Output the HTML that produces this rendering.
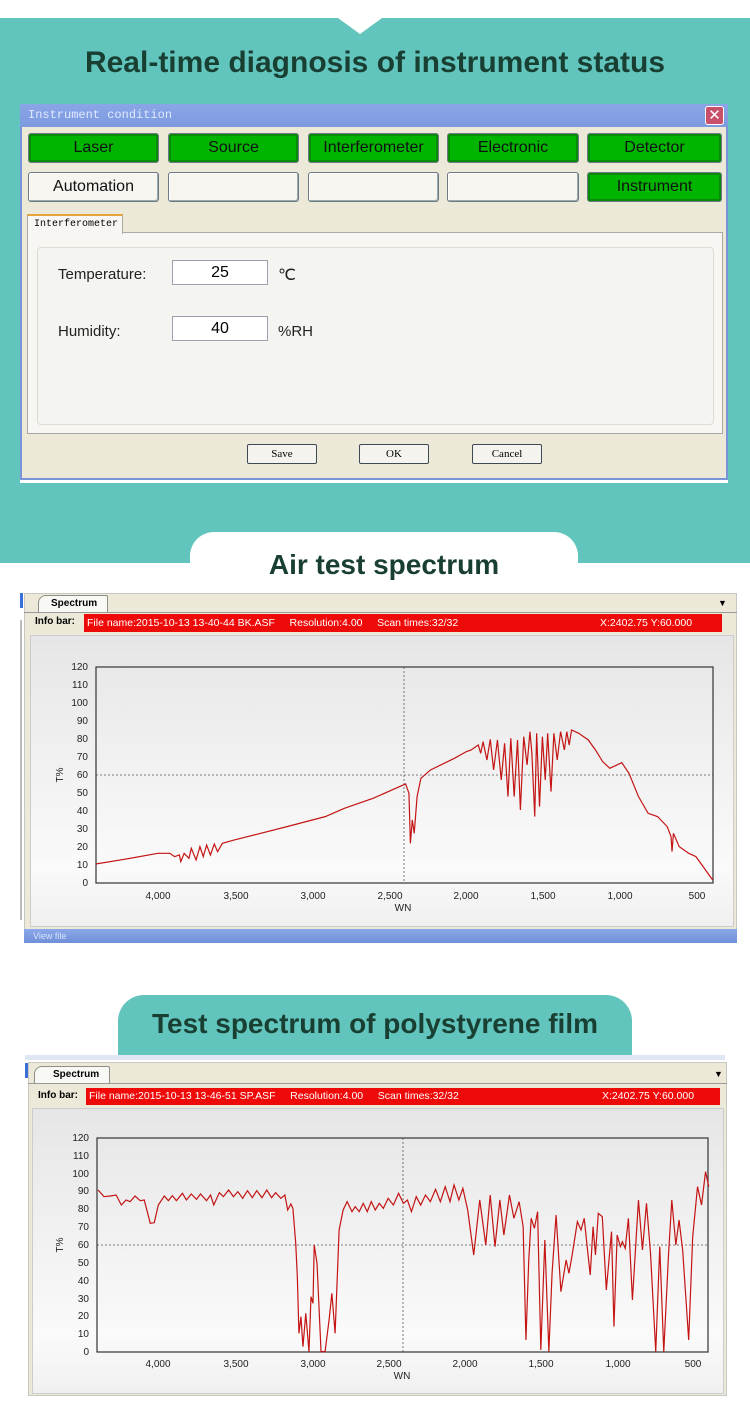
<!DOCTYPE html>
<html><head><meta charset="utf-8"><style>
*{margin:0;padding:0;box-sizing:border-box}
body{width:750px;height:1424px;position:relative;background:#fff;font-family:"Liberation Sans",Arial,sans-serif;overflow:hidden}
.abs{position:absolute}
.teal{background:#62c5bd}
.h1{font-weight:bold;color:#193f33;text-align:center}
.btn{position:absolute;height:30px;border:1px solid #6d7a86;border-radius:3px;font-size:16px;text-align:center;line-height:28px;color:#111;box-shadow:inset -1px -1px 0 #9aa,inset 1px 1px 0 #fff}
.g{background:#00b400;box-shadow:inset 0 0 0 2px #0a8a0a}
.w{background:#f6f5f0}
.sb{position:absolute;top:444px;width:70px;height:20px;border:1px solid #404a55;border-radius:2px;background:#f4f3ee;font-family:"Liberation Serif",serif;font-size:11px;text-align:center;line-height:18px}
.inp{position:absolute;left:172px;width:96px;height:25px;background:#fff;border:1px solid #9aa3ad;text-align:center;font-size:16px;line-height:23px}
.lbl{position:absolute;font-size:15px;color:#222}
.tick{font-size:10px;fill:#222;font-family:"Liberation Sans",sans-serif}
</style></head><body>
<div class="abs teal" style="left:0;top:18px;width:750px;height:545px"></div>
<div class="abs" style="left:338px;top:18px;width:0;height:0;border-left:22px solid transparent;border-right:22px solid transparent;border-top:16px solid #fff"></div>
<div class="abs h1" style="left:0;top:46px;width:750px;font-size:30px">Real-time diagnosis of instrument status</div>

<!-- dialog -->
<div class="abs" style="left:20px;top:104px;width:708px;height:376px;background:#ece9d8;border:2px solid #7b93d8;border-top:none"></div>
<div class="abs" style="left:20px;top:104px;width:708px;height:23px;background:linear-gradient(#8aa6e6,#7d9ae0);color:#dfe8ff;font-family:'Liberation Mono',monospace;font-size:12px;line-height:23px;padding-left:8px">Instrument condition</div>
<div class="abs" style="left:705px;top:106px;width:19px;height:19px;background:#c9506a;border:1px solid #fff;border-radius:3px;color:#fff;font-size:15px;text-align:center;line-height:17px">✕</div>
<div class="btn g" style="left:28px;top:133px;width:131px">Laser</div>
<div class="btn g" style="left:168px;top:133px;width:131px">Source</div>
<div class="btn g" style="left:308px;top:133px;width:131px">Interferometer</div>
<div class="btn g" style="left:447px;top:133px;width:132px">Electronic</div>
<div class="btn g" style="left:587px;top:133px;width:135px">Detector</div>
<div class="btn w" style="left:28px;top:172px;width:131px">Automation</div>
<div class="btn w" style="left:168px;top:172px;width:131px"></div>
<div class="btn w" style="left:308px;top:172px;width:131px"></div>
<div class="btn w" style="left:447px;top:172px;width:132px"></div>
<div class="btn g" style="left:587px;top:172px;width:135px">Instrument</div>
<div class="abs" style="left:27px;top:232px;width:696px;height:202px;background:#f7f6f2;border:1px solid #a9aaa5"></div>
<div class="abs" style="left:27px;top:214px;width:96px;height:20px;background:#f7f6f2;border:1px solid #a9aaa5;border-top:2px solid #e8a33c;border-bottom:none;font-family:'Liberation Mono',monospace;font-size:10px;line-height:17px;padding-left:6px">Interferometer</div>
<div class="abs" style="left:37px;top:247px;width:677px;height:178px;border:1px solid #dcdcd6;border-radius:4px;background:#f4f4f1"></div>
<div class="lbl" style="left:58px;top:266px">Temperature:</div>
<div class="inp" style="top:260px">25</div>
<div class="lbl" style="left:278px;top:265px;font-size:16px">℃</div>
<div class="lbl" style="left:58px;top:323px">Humidity:</div>
<div class="inp" style="top:316px">40</div>
<div class="lbl" style="left:278px;top:323px">%RH</div>
<div class="sb" style="left:247px">Save</div>
<div class="sb" style="left:359px">OK</div>
<div class="sb" style="left:472px">Cancel</div>
<div class="abs" style="left:20px;top:480px;width:708px;height:3px;background:#fff"></div>

<!-- pill 1 -->
<div class="abs h1" style="left:190px;top:532px;width:388px;height:50px;background:#fff;border-radius:24px 24px 0 0;font-size:28px;line-height:66px">Air test spectrum</div>

<!-- window 1 -->
<div class="abs" style="left:20px;top:593px;width:3px;height:15px;background:#3a6fd8"></div>
<div class="abs" style="left:20px;top:620px;width:2px;height:300px;background:#bbb"></div>
<div class="abs" style="left:24px;top:593px;width:713px;height:350px;background:#ece9d8;border:1px solid #c8c8c0"></div>
<div class="abs" style="left:38px;top:595px;width:70px;height:17px;background:#f8f8f4;border:1px solid #8e8e88;border-bottom:none;border-radius:8px 2px 0 0;font-size:10px;font-weight:bold;line-height:15px;padding-left:12px">Spectrum</div>
<div class="abs" style="left:718px;top:598px;font-size:9px">▼</div>
<div class="abs" style="left:24px;top:612px;width:713px;height:1px;background:#999"></div>
<div class="abs" style="left:35px;top:616px;font-size:10px;font-weight:bold">Info bar:</div>
<div class="abs" style="left:84px;top:614px;width:638px;height:18px;background:#ef0a0a;color:#fff;font-size:10.5px;line-height:18px;white-space:pre;padding-left:3px">File name:2015-10-13 13-40-44 BK.ASF     Resolution:4.00     Scan times:32/32</div>
<div class="abs" style="left:600px;top:614px;color:#fff;font-size:10.5px;line-height:18px">X:2402.75 Y:60.000</div>
<div class="abs" style="left:30px;top:635px;width:704px;height:292px;background:linear-gradient(#e6e6e6,#fafafa 80%,#f0f0f0);border:1px solid #ccc"></div>
<div class="abs" style="left:24px;top:929px;width:713px;height:14px;background:linear-gradient(#8ba8e8,#6f8fd8);color:#d8e2ff;font-size:9px;line-height:14px;padding-left:9px">View file</div>

<!-- pill 2 -->
<div class="abs teal h1" style="left:118px;top:995px;width:514px;height:62px;border-radius:26px 26px 0 0;font-size:28px;line-height:58px">Test spectrum of polystyrene film</div>
<div class="abs" style="left:25px;top:1055px;width:700px;height:5px;background:#dfe7f5"></div>
<div class="abs" style="left:25px;top:1063px;width:3px;height:15px;background:#3a6fd8"></div>
<div class="abs" style="left:28px;top:1062px;width:699px;height:334px;background:#ece9d8;border:1px solid #c8c8c0"></div>
<div class="abs" style="left:34px;top:1066px;width:76px;height:17px;background:#f8f8f4;border:1px solid #8e8e88;border-bottom:none;border-radius:8px 2px 0 0;font-size:10px;font-weight:bold;line-height:15px;padding-left:18px">Spectrum</div>
<div class="abs" style="left:714px;top:1069px;font-size:9px">▼</div>
<div class="abs" style="left:28px;top:1083px;width:699px;height:1px;background:#999"></div>
<div class="abs" style="left:38px;top:1090px;font-size:10px;font-weight:bold">Info bar:</div>
<div class="abs" style="left:86px;top:1088px;width:634px;height:17px;background:#ef0a0a;color:#fff;font-size:10.5px;line-height:17px;white-space:pre;padding-left:3px">File name:2015-10-13 13-46-51 SP.ASF     Resolution:4.00     Scan times:32/32</div>
<div class="abs" style="left:602px;top:1088px;color:#fff;font-size:10.5px;line-height:17px">X:2402.75 Y:60.000</div>
<div class="abs" style="left:32px;top:1108px;width:692px;height:286px;background:linear-gradient(#e6e6e6,#fafafa 80%,#f0f0f0);border:1px solid #ccc"></div>

<svg class="abs" style="left:0;top:0" width="750" height="1424" viewBox="0 0 750 1424">
<rect x="96" y="667" width="617" height="216" fill="none" stroke="#333" stroke-width="1.2"/>
<line x1="404" y1="667" x2="404" y2="883" stroke="#555" stroke-dasharray="2,2" stroke-width=".8"/>
<line x1="96" y1="775" x2="713" y2="775" stroke="#555" stroke-dasharray="2,2" stroke-width=".8"/>
<g class="tick" text-anchor="end">
<text x="88" y="670">120</text><text x="88" y="688">110</text><text x="88" y="706">100</text><text x="88" y="724">90</text><text x="88" y="742">80</text><text x="88" y="760">70</text><text x="88" y="778">60</text><text x="88" y="796">50</text><text x="88" y="814">40</text><text x="88" y="832">30</text><text x="88" y="850">20</text><text x="88" y="868">10</text><text x="88" y="886">0</text>
</g>
<text class="tick" transform="translate(63,775) rotate(-90)" text-anchor="middle">T%</text>
<g class="tick" text-anchor="middle">
<text x="158" y="899">4,000</text><text x="236" y="899">3,500</text><text x="313" y="899">3,000</text><text x="390" y="899">2,500</text><text x="466" y="899">2,000</text><text x="543" y="899">1,500</text><text x="620" y="899">1,000</text><text x="697" y="899">500</text><text x="403" y="911">WN</text>
</g>
<g transform="translate(0,580) scale(0.4783,0.3333)">
<polyline fill="none" stroke="#c41414" stroke-width="1.2" vector-effect="non-scaling-stroke" points="200,852 260,838 330,820 355,820 365,830 375,825 378,845 385,820 395,835 400,805 410,840 418,800 425,830 432,795 440,825 448,792 455,815 465,790 490,780 540,762 600,740 680,710 720,685 780,655 848,612 855,640 858,790 862,720 866,760 872,650 880,595 900,570 950,535 975,515 985,510 995,500 1000,495 1005,520 1010,485 1018,540 1025,478 1032,570 1040,480 1048,600 1055,490 1062,650 1068,475 1075,650 1082,480 1088,690 1095,470 1102,555 1108,455 1112,520 1118,710 1122,460 1128,680 1134,470 1140,600 1145,460 1152,635 1158,460 1165,540 1172,455 1180,510 1185,455 1190,495 1195,450 1210,460 1230,480 1245,510 1260,545 1275,565 1300,548 1315,580 1335,650 1355,700 1375,710 1395,740 1403,770 1405,815 1408,760 1420,800 1440,820 1455,830 1470,860 1490,900"/>
</g>
<rect x="97" y="1138" width="611" height="214" fill="none" stroke="#333" stroke-width="1.2"/>
<line x1="403" y1="1138" x2="403" y2="1352" stroke="#555" stroke-dasharray="2,2" stroke-width=".8"/>
<line x1="97" y1="1245" x2="708" y2="1245" stroke="#555" stroke-dasharray="2,2" stroke-width=".8"/>
<g class="tick" text-anchor="end">
<text x="89" y="1141">120</text><text x="89" y="1159">110</text><text x="89" y="1177">100</text><text x="89" y="1194">90</text><text x="89" y="1212">80</text><text x="89" y="1230">70</text><text x="89" y="1248">60</text><text x="89" y="1266">50</text><text x="89" y="1284">40</text><text x="89" y="1302">30</text><text x="89" y="1319">20</text><text x="89" y="1337">10</text><text x="89" y="1355">0</text>
</g>
<text class="tick" transform="translate(63,1245) rotate(-90)" text-anchor="middle">T%</text>
<g class="tick" text-anchor="middle">
<text x="158" y="1367">4,000</text><text x="236" y="1367">3,500</text><text x="313" y="1367">3,000</text><text x="389" y="1367">2,500</text><text x="465" y="1367">2,000</text><text x="541" y="1367">1,500</text><text x="618" y="1367">1,000</text><text x="693" y="1367">500</text><text x="402" y="1379">WN</text>
</g>
<g transform="translate(90,1130) scale(0.4018,0.3333)">
<polyline fill="none" stroke="#c41414" stroke-width="1.2" vector-effect="non-scaling-stroke" points="20,180 35,200 50,198 65,195 78,225 90,210 100,215 112,198 125,212 135,210 150,280 160,278 170,225 185,198 195,212 205,197 215,212 230,190 240,210 252,192 265,208 275,192 290,212 300,195 308,225 322,188 332,200 345,180 357,200 368,185 380,205 392,182 404,203 415,182 428,203 440,180 452,203 462,188 475,205 485,195 492,240 500,222 505,235 512,340 516,440 520,610 525,560 530,650 537,550 545,665 550,500 555,520 558,345 565,400 575,665 585,665 595,570 602,490 610,610 620,300 630,240 640,215 652,245 660,230 670,245 680,220 690,245 700,215 710,240 720,220 730,235 742,205 755,225 768,190 780,220 790,210 800,245 812,200 823,225 835,195 847,215 860,178 872,215 884,170 896,215 906,165 918,210 928,175 940,240 955,375 970,210 985,345 996,195 1008,350 1020,210 1030,315 1044,195 1055,265 1068,215 1078,290 1085,630 1092,390 1098,265 1106,295 1114,245 1122,660 1132,330 1142,665 1150,430 1160,255 1172,485 1185,390 1192,430 1200,375 1213,275 1222,300 1230,265 1240,380 1245,435 1252,290 1258,375 1265,250 1275,260 1285,480 1298,305 1304,590 1312,315 1320,350 1325,335 1332,355 1340,265 1350,510 1365,210 1375,360 1385,220 1395,370 1408,665 1418,350 1428,665 1440,370 1448,210 1458,345 1466,270 1475,360 1490,630 1500,320 1512,170 1522,225 1532,125 1540,170"/>
</g>
</svg>
</body></html>
